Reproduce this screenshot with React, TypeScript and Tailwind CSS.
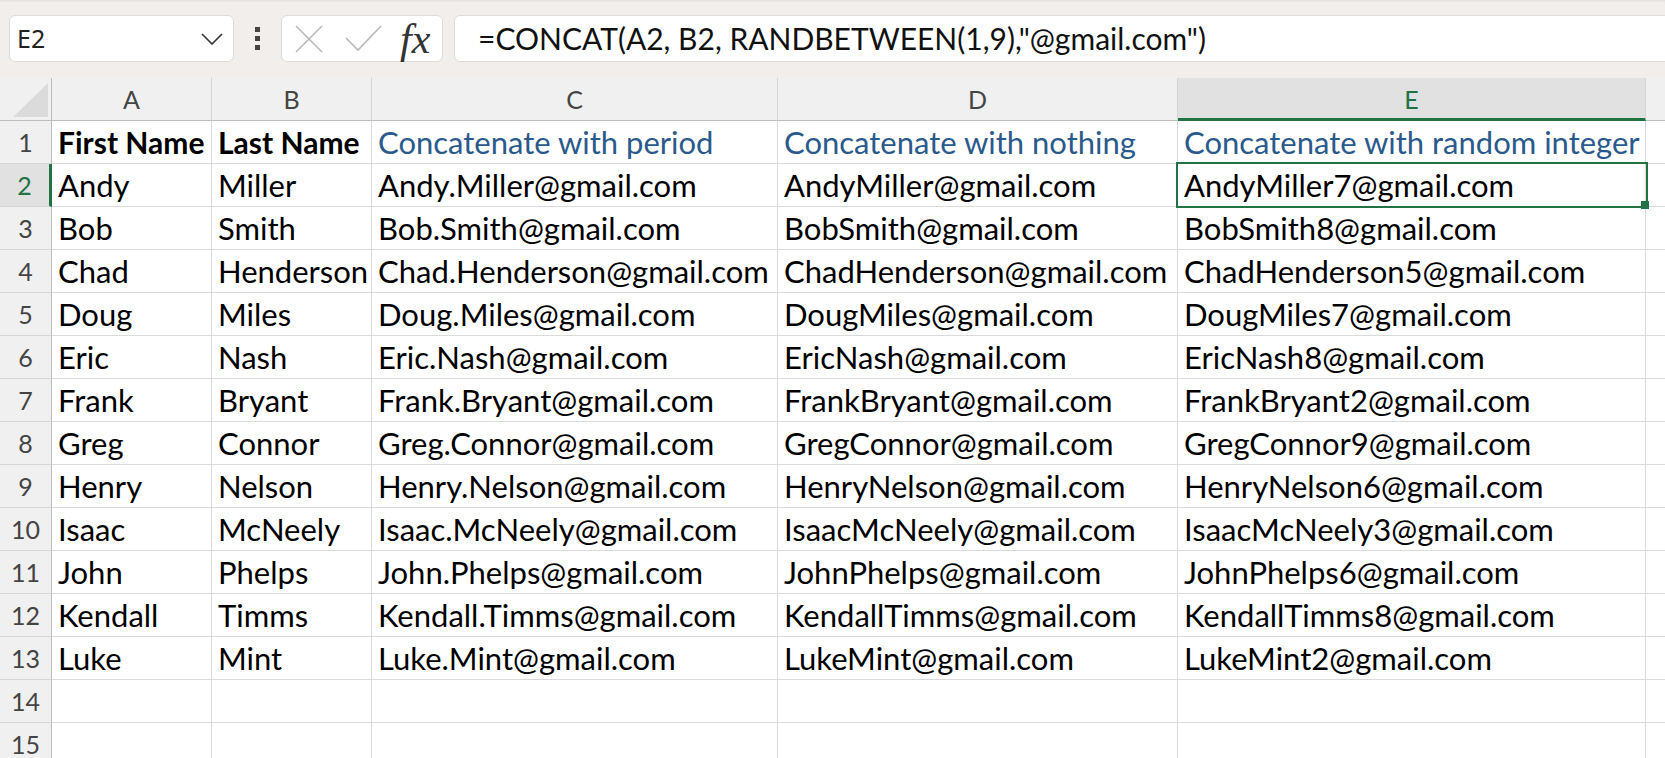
import React from "react";

const people: [string, string, number][] = [
  ["Andy", "Miller", 7],
  ["Bob", "Smith", 8],
  ["Chad", "Henderson", 5],
  ["Doug", "Miles", 7],
  ["Eric", "Nash", 8],
  ["Frank", "Bryant", 2],
  ["Greg", "Connor", 9],
  ["Henry", "Nelson", 6],
  ["Isaac", "McNeely", 3],
  ["John", "Phelps", 6],
  ["Kendall", "Timms", 8],
  ["Luke", "Mint", 2],
];

const colW = ["w-[160px]", "w-[160px]", "w-[406px]", "w-[400px]", "w-[468px]"];
const letters = ["A", "B", "C", "D", "E"];

const cellBase =
  "shrink-0 border-r border-b border-[#dadada] pl-[6px] leading-[42px] whitespace-nowrap overflow-hidden";

const Toolbar = () => (
  <div className="flex h-[78px] items-start bg-[#f2eeec] pt-[15px] pl-[9px] shadow-[inset_0_3px_3px_-2px_rgba(0,0,0,0.08)]">
    <div className="flex h-[47px] w-[225px] items-center justify-between rounded-[6px] border border-[#dcdcdc] bg-white pl-[7px] pr-[10px]">
      <span className="font-['Noto_Sans',sans-serif] text-[25px] text-[#222]">E2</span>
      <svg width="22" height="12" viewBox="0 0 22 12" fill="none">
        <path d="M1 1 L11 11 L21 1" stroke="#333" strokeWidth="1.6" />
      </svg>
    </div>
    <div className="ml-[21px] flex h-[47px] flex-col justify-center gap-[4px]">
      <div className="h-[5px] w-[5px] bg-[#444]" />
      <div className="h-[5px] w-[5px] bg-[#444]" />
      <div className="h-[5px] w-[5px] bg-[#444]" />
    </div>
    <div className="ml-[21px] flex h-[47px] w-[162px] items-center rounded-[6px] border border-[#dcdcdc] bg-white pl-[13px]">
      <svg width="28" height="28" viewBox="0 0 28 28" fill="none">
        <path d="M1 1 L27 27 M27 1 L1 27" stroke="#b8b8b8" strokeWidth="1.6" />
      </svg>
      <svg className="ml-[22px]" width="37" height="27" viewBox="0 0 37 27" fill="none">
        <path d="M1 13 L13 25 L36 1" stroke="#b8b8b8" strokeWidth="1.6" />
      </svg>
      <span className="ml-[18px] font-['Liberation_Serif',serif] text-[42px] italic leading-none text-[#333]">
        fx
      </span>
    </div>
    <div className="-mr-4 ml-[11px] flex h-[47px] flex-1 items-center rounded-[6px] border border-[#dcdcdc] bg-white pl-[23px]">
      <span className="text-[30px] text-[#111]">=CONCAT(A2, B2, RANDBETWEEN(1,9),"@gmail.com")</span>
    </div>
  </div>
);

const ColumnHeaders = () => (
  <div className="flex h-[43px] bg-[#f0f0f0] text-[25px] text-[#444]">
    <div className="flex w-[52px] shrink-0 items-start border-r border-b border-[#bdbdbd]">
      <svg width="51" height="42" viewBox="0 0 51 42">
        <polygon points="13,39 48,39 48,5" fill="#dbdbdb" />
      </svg>
    </div>
    {letters.map((l, i) =>
      l === "E" ? (
        <div
          key={l}
          className={`${colW[i]} shrink-0 border-r border-[#d5d5d5] border-b-[3px] border-b-[#217346] bg-[#e1e1e1] text-center leading-[42px] text-[#217346]`}
        >
          {l}
        </div>
      ) : (
        <div
          key={l}
          className={`${colW[i]} shrink-0 border-r border-[#d5d5d5] border-b border-b-[#bdbdbd] text-center leading-[42px]`}
        >
          {l}
        </div>
      )
    )}
    <div className="flex-1 border-b border-[#bdbdbd]" />
  </div>
);

const RowHead = ({ n, active }: { n: number; active?: boolean }) =>
  active ? (
    <div className="w-[52px] shrink-0 border-b border-b-[#d5d5d5] border-r-[3px] border-r-[#217346] bg-[#e1e1e1] text-center text-[25px] leading-[42px] text-[#217346]">
      {n}
    </div>
  ) : (
    <div className="w-[52px] shrink-0 border-b border-b-[#d5d5d5] border-r border-r-[#bdbdbd] bg-[#f0f0f0] text-center text-[25px] leading-[42px] text-[#444]">
      {n}
    </div>
  );

const Row = ({ n, cells, header }: { n: number; cells: string[]; header?: boolean }) => (
  <div className="flex h-[43px] text-[31px]">
    <RowHead n={n} active={n === 2} />
    {colW.map((w, i) => {
      let tone = "text-black";
      if (header && i < 2) tone = "font-bold text-black text-[30px]";
      if (header && i >= 2) tone = "text-[#2a5a8c]";
      return (
        <div key={i} className={`${cellBase} ${w} ${tone} ${n === 2 && i === 4 ? "relative overflow-visible" : ""}`}>
          {cells[i] ?? ""}
          {n === 2 && i === 4 && (
            <div className="absolute -top-[2px] -right-[3px] -bottom-[2px] -left-[2px] z-10 border-2 border-[#217346]">
              <div className="absolute -right-[3px] -bottom-[3px] h-[8px] w-[8px] bg-[#217346]" />
            </div>
          )}
        </div>
      );
    })}
    <div className="flex-1 border-b border-[#dadada]" />
  </div>
);

export default function App() {
  return (
    <div className="h-[758px] w-[1665px] overflow-hidden bg-white font-['Lato',sans-serif]">
      <Toolbar />
      <ColumnHeaders />
      <Row
        n={1}
        header
        cells={["First Name", "Last Name", "Concatenate with period", "Concatenate with nothing", "Concatenate with random integer"]}
      />
      {people.map(([f, l, r], i) => (
        <Row
          key={f}
          n={i + 2}
          cells={[f, l, `${f}.${l}@gmail.com`, `${f}${l}@gmail.com`, `${f}${l}${r}@gmail.com`]}
        />
      ))}
      <Row n={14} cells={[]} />
      <Row n={15} cells={[]} />
    </div>
  );
}
